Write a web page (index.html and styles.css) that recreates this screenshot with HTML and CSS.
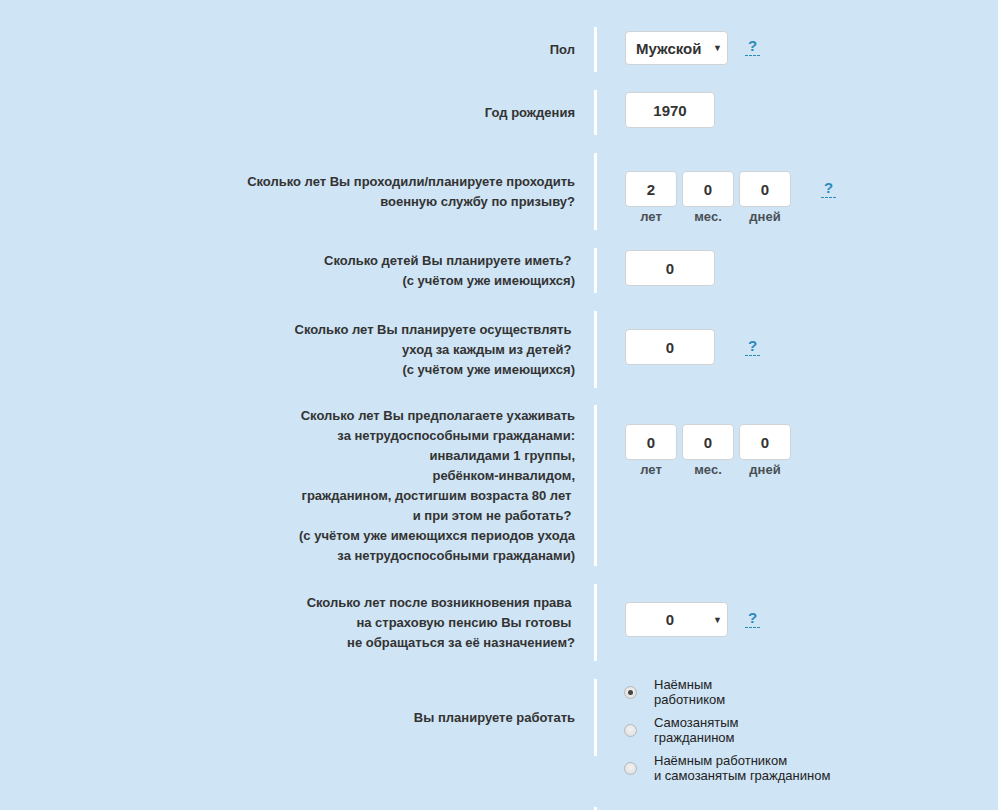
FILE: index.html
```html
<!DOCTYPE html>
<html lang="ru">
<head>
<meta charset="utf-8">
<title>Пенсионный калькулятор</title>
<link rel="stylesheet" href="styles.css">
</head>
<body>
<div class="form">

  <div class="row">
    <div class="label h45">Пол</div>
    <div class="ctl pt4">
      <div class="select w103"><span class="sel-text left">Мужской</span><span class="arrow">▼</span></div>
      <span class="help near mt8">?</span>
    </div>
  </div>

  <div class="row">
    <div class="label h45">Год рождения</div>
    <div class="ctl pt2">
      <div class="field">1970</div>
    </div>
  </div>

  <div class="row">
    <div class="label h77"><div>Сколько лет Вы проходили/планируете проходить<br>военную службу по призыву?</div></div>
    <div class="ctl pt18">
      <div class="trio">
        <div class="unit"><div class="field small">2</div><span class="unit-name">лет</span></div>
        <div class="unit"><div class="field small">0</div><span class="unit-name">мес.</span></div>
        <div class="unit"><div class="field small">0</div><span class="unit-name">дней</span></div>
      </div>
      <span class="help mt10">?</span>
    </div>
  </div>

  <div class="row">
    <div class="label h45"><div>Сколько детей Вы планируете иметь?&nbsp;<br>(с учётом уже имеющихся)</div></div>
    <div class="ctl pt2">
      <div class="field">0</div>
    </div>
  </div>

  <div class="row tight">
    <div class="label h77"><div>Сколько лет Вы планируете осуществлять&nbsp;<br>уход за каждым из детей?&nbsp;<br>(с учётом уже имеющихся)</div></div>
    <div class="ctl pt18">
      <div class="field">0</div>
      <span class="help mt10">?</span>
    </div>
  </div>

  <div class="row">
    <div class="label h161"><div>Сколько лет Вы предполагаете ухаживать<br>за нетрудоспособными гражданами:<br>инвалидами 1 группы,<br>ребёнком-инвалидом,<br>гражданином, достигшим возраста 80 лет&nbsp;<br>и при этом не работать?&nbsp;<br>(с учётом уже имеющихся периодов ухода<br>за нетрудоспособными гражданами)</div></div>
    <div class="ctl pt19">
      <div class="trio">
        <div class="unit"><div class="field small">0</div><span class="unit-name">лет</span></div>
        <div class="unit"><div class="field small">0</div><span class="unit-name">мес.</span></div>
        <div class="unit"><div class="field small">0</div><span class="unit-name">дней</span></div>
      </div>
    </div>
  </div>

  <div class="row">
    <div class="label h77"><div>Сколько лет после возникновения права&nbsp;<br>на страховую пенсию Вы готовы&nbsp;<br>не обращаться за её назначением?</div></div>
    <div class="ctl pt18">
      <div class="select w103 tall"><span class="sel-text center">0</span><span class="arrow">▼</span></div>
      <span class="help near mt9">?</span>
    </div>
  </div>

  <div class="row">
    <div class="label h77">Вы планируете работать</div>
    <div class="ctl radios-wrap">
      <div class="radios">
        <label class="radio-item"><span class="radio checked"></span><span class="radio-text">Наёмным<br>работником</span></label>
        <label class="radio-item"><span class="radio"></span><span class="radio-text">Самозанятым<br>гражданином</span></label>
        <label class="radio-item"><span class="radio"></span><span class="radio-text">Наёмным работником<br>и самозанятым гражданином</span></label>
      </div>
    </div>
  </div>

  <div class="row">
    <div class="label h45"></div>
    <div class="ctl pt2"></div>
  </div>

</div>
</body>
</html>
```

FILE: styles.css
```css
html, body {
  margin: 0;
  padding: 0;
}

body {
  background: #cfe4f4;
  font-family: "Liberation Sans", Arial, sans-serif;
  color: #333;
}

.form {
  padding-top: 27px;
}

.row {
  display: flex;
  align-items: flex-start;
  margin-bottom: 18px;
}

.row.tight {
  margin-bottom: 17px;
}

.label {
  box-sizing: border-box;
  width: 597px;
  flex: none;
  padding-right: 19px;
  border-right: 3px solid #ffffff;
  display: flex;
  align-items: center;
  justify-content: flex-end;
  text-align: right;
  font-weight: bold;
  font-size: 13px;
  line-height: 20px;
  color: #333;
}

.h45 { height: 45px; }
.h77 { height: 77px; }
.h161 { height: 161px; }

.ctl {
  padding-left: 28px;
  display: flex;
  align-items: flex-start;
}

.pt2 { padding-top: 2px; }
.pt4 { padding-top: 4px; }
.pt18 { padding-top: 18px; }
.pt19 { padding-top: 19px; }

.field {
  box-sizing: border-box;
  width: 90px;
  height: 36px;
  background: #fff;
  border: 1px solid #cfd3d6;
  border-radius: 4px;
  display: flex;
  align-items: center;
  justify-content: center;
  font-weight: bold;
  font-size: 15px;
  color: #333;
}

.field.small {
  width: 52px;
}

.trio {
  display: flex;
  gap: 5px;
}

.unit {
  display: flex;
  flex-direction: column;
  align-items: center;
}

.unit-name {
  margin-top: 2px;
  font-size: 13px;
  font-weight: bold;
  line-height: 16px;
  color: #4a4f55;
}

.select {
  box-sizing: border-box;
  height: 34px;
  background: #fff;
  border: 1px solid #cfd3d6;
  border-radius: 4px;
  display: flex;
  align-items: center;
  position: relative;
  font-weight: bold;
  font-size: 15px;
  color: #333;
}

.select.tall { height: 35px; }

.w103 { width: 103px; }

.sel-text.left {
  padding-left: 10px;
}

.sel-text.center {
  width: 88px;
  text-align: center;
}

.arrow {
  position: absolute;
  right: 5px;
  top: 50%;
  transform: translateY(-50%);
  font-size: 9px;
  color: #333;
}

.help {
  display: inline-block;
  margin-left: 17px;
  padding: 0 3px 2px;
  font-weight: bold;
  font-size: 15px;
  line-height: 14px;
  color: #2b8bbd;
  border-bottom: 1px dashed #2b8bbd;
  cursor: help;
}

.help.near { margin-left: 17px; }
.ctl .field + .help,
.ctl .trio + .help { margin-left: 30px; }

.mt8 { margin-top: 8px; }
.mt9 { margin-top: 9px; }
.mt10 { margin-top: 10px; }

.radios-wrap {
  padding-bottom: 6px;
}

.radios {
  margin-top: -2px;
  display: flex;
  flex-direction: column;
  gap: 8px;
}

.radio-item {
  display: flex;
  align-items: center;
  height: 30px;
  cursor: pointer;
}

.radio {
  box-sizing: border-box;
  width: 13px;
  height: 13px;
  margin-left: -1px;
  margin-right: 17px;
  border-radius: 50%;
  border: 1px solid #b4b8bb;
  background: radial-gradient(circle at 50% 40%, #f2f2f2 0%, #dcdcdc 100%);
  position: relative;
  flex: none;
}

.radio.checked::after {
  content: "";
  position: absolute;
  left: 3px;
  top: 3px;
  width: 5px;
  height: 5px;
  border-radius: 50%;
  background: #444;
}

.radio-text {
  font-size: 13px;
  line-height: 15px;
  color: #222;
}
```
